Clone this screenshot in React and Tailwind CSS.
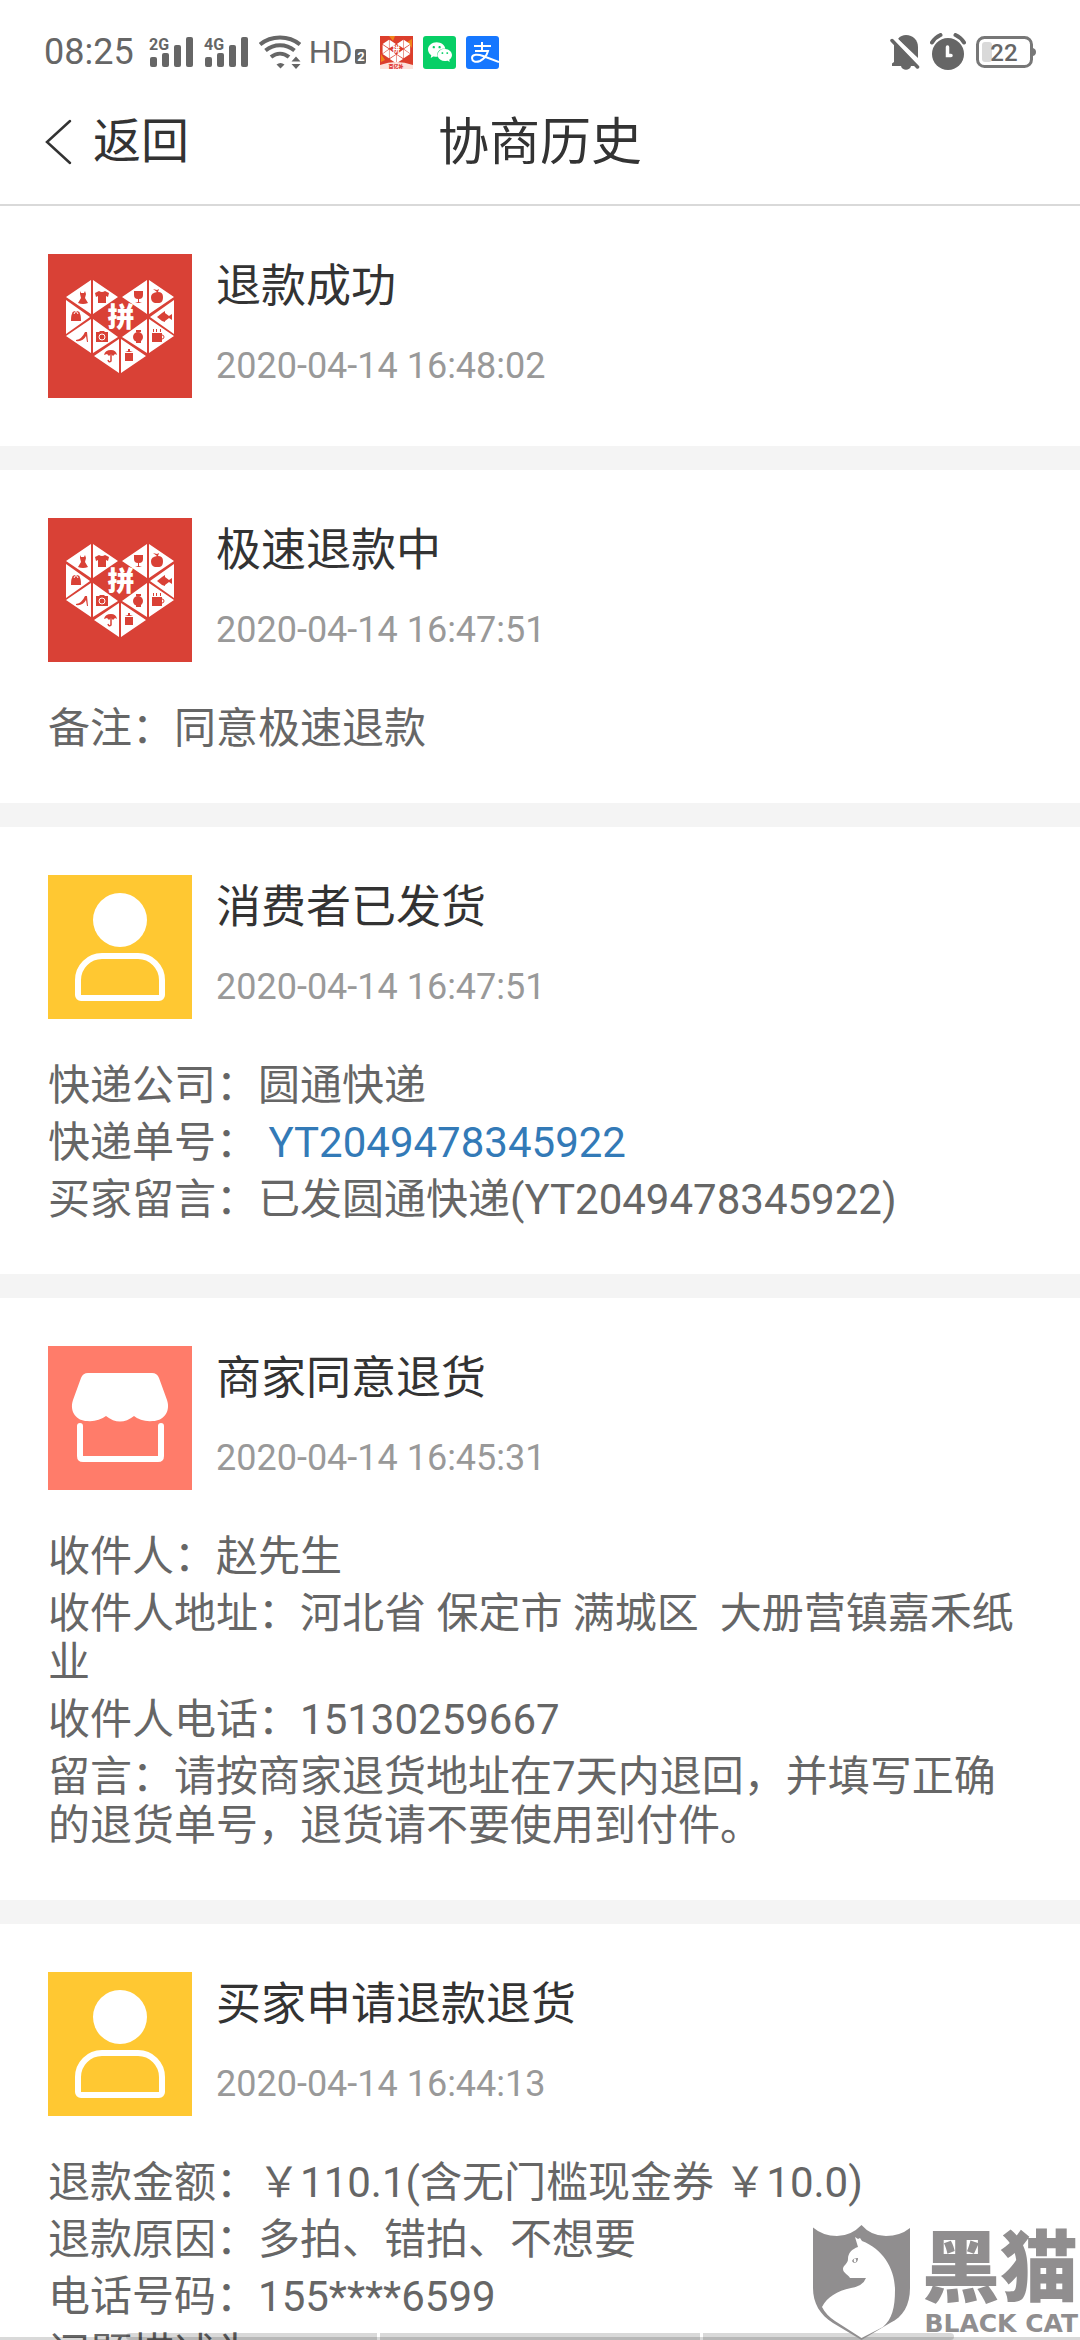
import { SiWechat } from "react-icons/si";

const RECORDS = [
  { icon: "heart", title: "退款成功", time: "2020-04-14 16:48:02", rows: [] },
  {
    icon: "heart",
    title: "极速退款中",
    time: "2020-04-14 16:47:51",
    rows: [{ label: "备注", value: "同意极速退款" }],
  },
  {
    icon: "user",
    title: "消费者已发货",
    time: "2020-04-14 16:47:51",
    rows: [
      { label: "快递公司", value: "圆通快递" },
      { label: "快递单号", value: "YT2049478345922", link: true },
      { label: "买家留言", value: "已发圆通快递(YT2049478345922)" },
    ],
  },
  {
    icon: "shop",
    title: "商家同意退货",
    time: "2020-04-14 16:45:31",
    rows: [
      { label: "收件人", value: "赵先生" },
      { label: "收件人地址", value: "河北省 保定市 满城区  大册营镇嘉禾纸业" },
      { label: "收件人电话", value: "15130259667" },
      {
        label: "留言",
        value: "请按商家退货地址在7天内退回，并填写正确的退货单号，退货请不要使用到付件。",
      },
    ],
  },
  {
    icon: "user",
    title: "买家申请退款退货",
    time: "2020-04-14 16:44:13",
    rows: [
      { label: "退款金额", value: "￥110.1(含无门槛现金券 ￥10.0)" },
      { label: "退款原因", value: "多拍、错拍、不想要" },
      { label: "电话号码", value: "155****6599" },
      { label: "问题描述为", value: "" },
    ],
  },
];

function Signal({ label }) {
  return (
    <svg viewBox="0 0 44 32" className="w-11 h-8 overflow-visible fill-current">
      <text x="0" y="14" fontSize="16" fontWeight="700">
        {label}
      </text>
      <rect x="1" y="21" width="7" height="10" rx="2" />
      <rect x="13" y="17" width="7" height="14" rx="2" />
      <rect x="25" y="9" width="7" height="22" rx="2" />
      <rect x="37" y="1" width="7" height="30" rx="2" />
    </svg>
  );
}

function Wifi() {
  return (
    <svg viewBox="0 0 42 34" className="w-[42px] h-[34px]" fill="none" stroke="currentColor" strokeWidth="4">
      <path d="M1 9.500C12 0 30 0 41 9.500" />
      <path d="M6.500 15.500C15 8.500 27 8.500 35.500 15.500" />
      <path d="M12 22C17.500 17.500 24.500 17.500 30 22" />
      <path d="M17.500 29.500q4-3 8 0L21.500 33.500z" fill="currentColor" stroke="none" />
      <path d="M32.500 26.500h9L37 21.500zM32.500 29h9L37 34z" fill="currentColor" stroke="none" />
    </svg>
  );
}

function BellOff() {
  return (
    <svg viewBox="0 0 30 36" className="w-[30px] h-9 fill-current">
      <path d="M8 5C10 2 13 1 16 1c7 0 12 5 12 12v11z" />
      <path d="M4 9v19l-2 1.500V32h9c1 5 9 5 10 0h5z" />
      <path d="M2 6.500L27.500 33" stroke="currentColor" strokeWidth="3.500" strokeLinecap="round" />
      <path d="M6 5L29 29" stroke="white" strokeWidth="3" />
    </svg>
  );
}

function Alarm() {
  return (
    <svg viewBox="0 0 36 38" className="w-9 h-[38px]" fill="none" strokeLinecap="round">
      <circle cx="18" cy="21" r="16" fill="currentColor" />
      <path d="M2 9.500Q5 4.500 10.500 2M34 9.500Q31 4.500 25.500 2" stroke="currentColor" strokeWidth="4" />
      <path d="M17.500 14v8.500h3.500" stroke="white" strokeWidth="3.500" />
    </svg>
  );
}

function Battery() {
  return (
    <svg viewBox="0 0 60 34" className="w-[60px] h-[34px]">
      <rect x="1.500" y="2.500" width="54" height="29" rx="7" fill="none" stroke="#777" strokeWidth="3" />
      <path d="M57 13q3 1 3 4t-3 4z" fill="#777" />
      <rect x="6" y="7" width="10" height="20" rx="3" fill="#d9d9d9" />
      <text x="28" y="26" fontSize="24" fontWeight="500" textAnchor="middle" fill="currentColor">
        22
      </text>
    </svg>
  );
}

function PayAppIcon() {
  return (
    <svg viewBox="0 0 33 33" className="size-[33px]">
      <rect width="33" height="33" rx="3" fill="#1677ff" />
      <path
        d="M8 10h17M16 6v9M9 15h13q-2 7-8 10c-5 2-8 0-8-3 0-4 6-4 11-2l16 6"
        fill="none"
        stroke="#fff"
        strokeWidth="2"
      />
    </svg>
  );
}

function StatusBar() {
  return (
    <div className="flex h-20 shrink-0 items-center justify-between pt-6 pr-11 pl-11 text-[#666]">
      <div className="flex items-center">
        <span className="text-[36px] leading-none">08:25</span>
        <div className="ml-[15px] flex items-center gap-[11px]">
          <Signal label="2G" />
          <Signal label="4G" />
          <Wifi />
        </div>
        <span className="ml-2 text-[32px] leading-none">HD</span>
        <span className="mb-[6px] ml-[3px] flex h-[15px] w-[11px] justify-center self-end rounded-[2px] bg-[#666] text-[13px] leading-[15px] font-bold text-white">
          2
        </span>
        <div className="ml-[14px] flex items-center gap-[10px]">
          <MallAppIcon />
          <span className="flex size-[33px] items-center justify-center rounded-[3px] bg-[#07cf66]">
            <SiWechat className="size-6 text-white" />
          </span>
          <PayAppIcon />
        </div>
      </div>
      <div className="flex items-center gap-[10px]">
        <BellOff />
        <Alarm />
        <Battery />
      </div>
    </div>
  );
}

// Triangles of the heart mosaic, shared by the avatar and the tiny app icon
const HEART =
  "M43 26V60L18 43zM45 26V60L70 43zM18 46V80L42 63zM43 65V99L18 82zM45 65V99L70 83zM71 85V119L46 102z" +
  "M101 26V60L126 43zM99 26V60L74 43zM126 46V80L102 63zM101 65V99L126 82zM99 65V99L74 83zM73 85V119L98 102z";

function MallAppIcon() {
  return (
    <svg viewBox="0 0 33 33" className="size-[33px]">
      <rect width="33" height="33" fill="#dc3e2c" />
      <path d="M9 0h6l-2 5zM27 6l5-3v9zM1 18l4 6-4 2z" fill="#f08418" />
      <g transform="translate(-2 -3) scale(.255)">
        <path d={HEART} fill="#fff" />
        <text x="72" y="75" fontSize="30" fontWeight="900" textAnchor="middle" fill="#fff">
          拼
        </text>
      </g>
      <path d="M0 29q16-6 33 0v4H0z" fill="#fde3dc" />
      <text x="16" y="32" fontSize="5" fontWeight="900" textAnchor="middle" fill="#d33">
        百亿补
      </text>
    </svg>
  );
}

function HeartAvatar() {
  return (
    <svg viewBox="0 0 144 144" className="size-36 shrink-0">
      <rect width="144" height="144" fill="#d94136" />
      <path d={HEART} fill="#fff" />
      <text x="73" y="73" fontSize="27" fontWeight="900" textAnchor="middle" fill="#fff">
        拼
      </text>
      <g fill="#d94136">
        {/* dress, shirt, goblet, apple */}
        <path d="M32 37l1 2h3l1-2 1 3-1 4 3 5q-5 2-10 0l3-5-1-4z" />
        <path d="M51 37q3 2 6 0l4 2-1 4-2-1v7h-8v-7l-2 1-1-4z" />
        <path d="M86 37h9v4q0 4-4 4v3l3 1h-7l3-1v-3q-4 0-4-4z" />
        <path d="M109 38l-4-3 4 1 2-1-1 3q5 0 5 5c0 7-4 6-6 6s-6 0-6-6q0-4 6-5z" />
        {/* handbag, fish */}
        <path d="M24 60q0-3 4-3t4 3q1 1 1 7H23q0-6 1-7z" />
        <path d="M26 60q2-5 4 0" fill="none" stroke="#fff" />
        <path d="M109 63l5-4 3-2v2l4 3 3-2v6l-3-2-4 3v1l-3-1z" />
        {/* heel, camera, watch, cup */}
        <path d="M28 86q6-1 9-8h2l1 10h-1l-1-6q-3 6-10 5z" />
        <path d="M48 78h3l1-1h4l1 1h3v10H48z" />
        <circle cx="54" cy="83" r="3" fill="none" stroke="#fff" />
        <circle cx="90" cy="83" r="5" />
        <path d="M88 76h5v2h-5zM88 87h5v2h-5z" />
        <path d="M104 79h10v9h-10zM105 75h1v3h-1zM108 75h1v3h-1zM112 75h1v3h-1z" />
        <circle cx="114" cy="83" r="2" fill="none" stroke="#d94136" />
        {/* umbrella, bottle */}
        <path d="M56 101q1-5 7-5 5 0 6 5l-2-1-2 2-2-2-2 2-2-2z" />
        <path d="M63 100v7q-2 2-3-1" fill="none" stroke="#d94136" strokeWidth="1.500" />
        <path d="M77 99h8v8h-8zM77 98l3-1v-2h2v2l3 1z" />
      </g>
    </svg>
  );
}

function UserAvatar() {
  return (
    <svg viewBox="0 0 144 144" className="size-36 shrink-0">
      <rect width="144" height="144" fill="#ffc832" />
      <circle cx="72" cy="45" r="27" fill="#fff" />
      <path
        d="M30 105a24 24 0 0 1 24-24h36a24 24 0 0 1 24 24v15a3 3 0 0 1-3 3H33a3 3 0 0 1-3-3z"
        fill="none"
        stroke="#fff"
        strokeWidth="6"
      />
    </svg>
  );
}

function ShopAvatar() {
  return (
    <svg viewBox="0 0 144 144" className="size-36 shrink-0">
      <rect width="144" height="144" fill="#ff7c6a" />
      <path
        d="M40 27h64q5 0 7 5l8 22c4 12-4 21-14 21q-12 1-19-5-14 11-28 0-8 6-19 5c-10 0-18-9-14-21l8-22q2-5 7-5z"
        fill="#fff"
      />
      <path
        d="M32 80v30q0 3 3 3h75q3 0 3-3V80"
        fill="none"
        stroke="#fff"
        strokeWidth="6"
        strokeLinecap="round"
      />
    </svg>
  );
}

const AVATARS = { heart: HeartAvatar, user: UserAvatar, shop: ShopAvatar };

function Record({ icon, title, time, rows }) {
  const Avatar = AVATARS[icon];
  return (
    <li className="bg-white p-12">
      <div className="flex gap-6">
        <Avatar />
        <div>
          <h2 className="text-[45px] leading-[66px] text-[#333]">{title}</h2>
          <time className="mt-[22px] block text-[36px] leading-[48px] text-[#999]">{time}</time>
        </div>
      </div>
      {rows.length > 0 && (
        <div className="mt-[38px] -mb-0.5 text-[42px] leading-[49px] text-[#666]">
          {rows.map((row) => (
            <p key={row.label} className="py-1 break-all whitespace-pre-wrap">
              {row.label}：
              {row.link ? (
                <>
                  {" "}
                  <a href="#express" className="text-[#337ab7]">
                    {row.value}
                  </a>
                </>
              ) : (
                row.value
              )}
            </p>
          ))}
        </div>
      )}
    </li>
  );
}

function Watermark() {
  return (
    <div className="absolute right-0 bottom-0 flex items-end gap-3 text-[#908e8f]">
      <svg viewBox="0 0 97 115" className="w-[97px] h-[115px]">
        <path
          d="M0 2.500Q10 11 24 11 38 11 48.500 0 58 11 73 11 87 11 97 3V63C97 80 90 92 77 98L48.500 115 20 98C7 90 0 78 0 63z"
          fill="currentColor"
        />
        <path
          d="M42 12l3 2 2-1 2 3C70 24 82 44 82 65c0 18-3 29-12 37L48.500 113 22 96Q13 90 9 82C14 72 24 66 38 63Q50 61 53 53H37C36 50 30 48 30 44c0-4 5-5 5-10 0-6 4-10 10-12z"
          fill="#fff"
        />
        <path d="M39 36q1-3 6-3 0 4-3 5-2 0-3-2z" fill="currentColor" />
        <ellipse cx="42" cy="35.500" rx="1.200" ry="2" fill="#fff" />
      </svg>
      <div className="flex flex-col items-end pr-0.5">
        <span className="text-[78px] leading-[84px] font-black">黑猫</span>
        <span className="pb-1 font-['DejaVu_Sans'] text-[25px] leading-6 font-bold">BLACK CAT</span>
      </div>
    </div>
  );
}

function GestureBar() {
  return (
    <div className="absolute inset-x-0 bottom-0">
      <div className="mx-[126px] flex h-[7px] gap-[3px]">
        <span className="flex-1 rounded-l-full bg-black/15" />
        <span className="w-[320px] bg-black/15" />
        <span className="flex-1 rounded-r-full bg-black/15" />
      </div>
      <div className="absolute inset-x-0 bottom-0 h-[3px] bg-black/15" />
    </div>
  );
}

export default function App() {
  return (
    <div className="relative flex h-screen flex-col overflow-hidden bg-white font-[Roboto,'Noto_Sans_CJK_SC',sans-serif]">
      <StatusBar />
      <header className="grid h-[126px] shrink-0 grid-cols-3 items-center border-b-2 border-[#d9d9d9] px-11 text-[#333]">
        <button type="button" className="flex items-center gap-[21px] text-[48px] leading-none">
          <svg viewBox="0 0 28 46" className="w-7 h-[46px]" fill="none" stroke="currentColor" strokeWidth="2.500">
            <path d="M26 2L3 23l23 21" strokeLinecap="round" />
          </svg>
          返回
        </button>
        <h1 className="text-center text-[51px] leading-none">协商历史</h1>
      </header>
      <main className="min-h-0 flex-1 overflow-hidden bg-[#f4f4f4]">
        <ul className="flex flex-col gap-6">
          {RECORDS.map((record, i) => (
            <Record key={i} {...record} />
          ))}
        </ul>
      </main>
      <GestureBar />
      <Watermark />
    </div>
  );
}
